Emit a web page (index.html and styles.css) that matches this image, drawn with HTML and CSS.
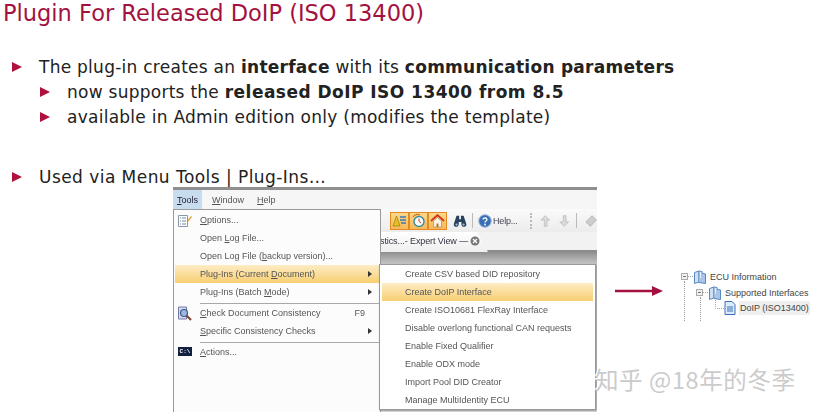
FILE: index.html
```html
<!DOCTYPE html>
<html lang="en">
<head>
<meta charset="utf-8">
<title>Plugin For Released DoIP</title>
<link rel="stylesheet" href="styles.css">
</head>
<body>
<main class="slide">
  <h1 class="title">Plugin For Released DoIP (ISO 13400)</h1>
  <ul class="bullets">
    <li class="lvl1">The plug-in creates an <b>interface</b> with its <b>communication parameters</b></li>
    <li class="lvl2">now supports the <b class="wide">released DoIP ISO 13400 from 8.5</b></li>
    <li class="lvl2">available in Admin edition only (modifies the template)</li>
    <li class="lvl1 gap">Used via Menu Tools | Plug-Ins…</li>
  </ul>
  <section class="figure">
    <div class="shot">
      <div class="menubar">
        <span class="mb-item active"><u>T</u>ools</span>
        <span class="mb-item"><u>W</u>indow</span>
        <span class="mb-item"><u>H</u>elp</span>
      </div>
      <div class="toolbar">
        <div class="toggles">
          <span class="toggle"><svg width="15" height="13" viewBox="0 0 15 13"><path d="M1 12 4.500 2 8 12z" fill="#e8c020" stroke="#8a7010" stroke-width=".6"/><path d="M8 3h6M8 6h6M9 9h5" stroke="#3b78b8" stroke-width="1.400"/></svg></span>
          <span class="toggle"><svg width="15" height="15" viewBox="0 0 15 15"><circle cx="8" cy="8.500" r="5" fill="#fff" stroke="#3a8a9a" stroke-width="1.400"/><path d="M8 5.500v3l2 1.500" stroke="#c04020" fill="none"/><path d="M2 4C4 1 7 1 9 2" stroke="#d07018" stroke-width="1.200" fill="none"/></svg></span>
          <span class="toggle"><svg width="15" height="14" viewBox="0 0 15 14"><path d="M1 7 7.500 1 14 7" fill="none" stroke="#d03818" stroke-width="1.800"/><path d="M3.500 7v6h8V7L7.500 3.500z" fill="#fbf6e8" stroke="#a88860" stroke-width=".7"/><path d="M6.500 9.500h2V13h-2z" fill="#c07028"/></svg></span>
        </div>
        <svg class="binoc" width="16" height="14" viewBox="0 0 16 14"><path d="M4 1h3v4h2V1h3l3 9a2.800 2.800 0 1 1-5.500 1V8h-3v3A2.800 2.800 0 1 1 1 10z" fill="#27415e"/><circle cx="4" cy="11" r="1.300" fill="#9fc0e0"/><circle cx="12" cy="11" r="1.300" fill="#9fc0e0"/></svg>
        <span class="tsep"></span>
        <span class="help"><svg width="14" height="14" viewBox="0 0 14 14"><circle cx="7" cy="7" r="6.200" fill="#3b6fb5" stroke="#8fb0d8"/><path d="M5 5.500C5 3.500 9 3.500 9 5.500 9 7 7 7 7 8.500" fill="none" stroke="#fff" stroke-width="1.300"/><circle cx="7" cy="10.500" r=".9" fill="#fff"/></svg>Help...</span>
        <span class="grip"></span>
        <svg class="ticon" width="14" height="14" viewBox="0 0 14 14"><path d="M7 1 12 6H9v7H6V6H2z" fill="#d8d8d8" stroke="#aaa" stroke-width=".8"/></svg>
        <svg class="ticon" width="14" height="14" viewBox="0 0 14 14"><path d="M7 13 12 8H9V1H6v7H2z" fill="#d8d8d8" stroke="#aaa" stroke-width=".8"/></svg>
        <span class="tsep"></span>
        <svg class="ticon tight" width="14" height="14" viewBox="0 0 14 14"><path d="M1 8 8 1l5 5-7 7z" fill="#c4c8c8" stroke="#999" stroke-width=".8"/></svg>
      </div>
      <div class="tabs"><span class="tab">stics...- Expert View — <svg width="10" height="10" viewBox="0 0 10 10"><circle cx="5" cy="5" r="4.500" fill="#777"/><path d="M3 3l4 4M7 3 3 7" stroke="#fff" stroke-width="1.300"/></svg></span></div>
      <div class="workspace"></div>

      <div class="menu">
        <div class="row"><svg class="mi" width="16" height="15" viewBox="0 0 16 15"><path d="M1.500 2.500h9v11h-9z" fill="#fff" stroke="#8a96a8"/><path d="M3 5h1M5 5h4M3 8h1M5 8h4M3 11h1M5 11h4" stroke="#7088a8"/><path d="M10 8l4-5 1 1-4 5z" fill="#e0a030"/></svg><span class="lbl"><u>O</u>ptions...</span></div>
        <div class="row"><span class="lbl">Open <u>L</u>og File...</span></div>
        <div class="row"><span class="lbl">Open Log File (<u>b</u>ackup version)...</span></div>
        <div class="row hi"><span class="lbl">Plug-Ins (Current <u>D</u>ocument)</span><i class="caret"></i></div>
        <div class="row"><span class="lbl">Plug-Ins (Batch <u>M</u>ode)</span><i class="caret"></i></div>
        <div class="msep"></div>
        <div class="row"><svg class="mi" width="16" height="15" viewBox="0 0 16 15"><path d="M1.500 1h8v12h-8z" fill="#d8dcf0" stroke="#7078a8"/><circle cx="7" cy="7" r="3.500" fill="#9ab8e0" stroke="#405888" stroke-width="1.200"/><path d="M9.500 9.500 14 14" stroke="#804030" stroke-width="2"/></svg><span class="lbl"><u>C</u>heck Document Consistency</span><span class="key">F9</span></div>
        <div class="row"><span class="lbl"><u>S</u>pecific Consistency Checks</span><i class="caret"></i></div>
        <div class="msep"></div>
        <div class="row"><span class="mi console">C:\</span><span class="lbl"><u>A</u>ctions...</span></div>
      </div>

      <div class="submenu">
        <div class="row">Create CSV based DID repository</div>
        <div class="row hi">Create DoIP Interface</div>
        <div class="row">Create ISO10681 FlexRay Interface</div>
        <div class="row">Disable overlong functional CAN requests</div>
        <div class="row">Enable Fixed Qualifier</div>
        <div class="row">Enable ODX mode</div>
        <div class="row">Import Pool DID Creator</div>
        <div class="row">Manage MultiIdentity ECU</div>
      </div>
    </div>

    <svg class="arrow" width="48" height="12" viewBox="0 0 48 12"><path d="M0 6h40" stroke="#a3123f" stroke-width="2.400"/><path d="M37 1 48 6 37 11z" fill="#a3123f"/></svg>

    <div class="tree">
      <div class="node">
        <svg class="lines" width="14" height="16" viewBox="0 0 14 16"><rect x="1.500" y="4.500" width="6" height="6" fill="#f0f0f0" stroke="#aaa"/><path d="M3 7.500h3" stroke="#777"/><path d="M8 7.500h6" stroke="#aaa" stroke-dasharray="1 1"/></svg>
        <svg class="book" width="14" height="14" viewBox="0 0 14 14"><path d="M1.500 2.500 6 1v11l-4.500 1.500z" fill="#cfe0f4" stroke="#5a88c0"/><path d="M6 1 9 1.500V12l-3 0z" fill="#e8f0fa" stroke="#5a88c0"/><path d="M9 3l3.500 1v9.500L6 12.500" fill="#a9c6ea" stroke="#5a88c0"/></svg>
        <span>ECU Information</span>
      </div>
      <div class="node indent1">
        <svg class="lines" width="14" height="16" viewBox="0 0 14 16"><rect x="1.500" y="4.500" width="6" height="6" fill="#f0f0f0" stroke="#aaa"/><path d="M3 7.500h3" stroke="#777"/><path d="M8 7.500h6" stroke="#aaa" stroke-dasharray="1 1"/></svg>
        <svg class="book" width="14" height="14" viewBox="0 0 14 14"><path d="M1.500 2.500 6 1v11l-4.500 1.500z" fill="#cfe0f4" stroke="#5a88c0"/><path d="M6 1 9 1.500V12l-3 0z" fill="#e8f0fa" stroke="#5a88c0"/><path d="M9 3l3.500 1v9.500L6 12.500" fill="#a9c6ea" stroke="#5a88c0"/></svg>
        <span>Supported Interfaces</span>
      </div>
      <div class="node indent2">
        <svg class="lines" width="14" height="16" viewBox="0 0 14 16"><path d="M4.500 0v8.500H14" fill="none" stroke="#aaa" stroke-dasharray="1 1"/></svg>
        <svg class="book" width="12" height="14" viewBox="0 0 12 14"><path d="M1 .5h7l3 3v10H1z" fill="#dcebfa" stroke="#3a70b8"/><path d="M3 6h6M3 8h6M3 10h6" stroke="#3a70b8"/></svg>
        <span class="sel">DoIP (ISO13400)</span>
      </div>
      <i class="vline v1"></i>
      <i class="vline v2"></i>
    </div>
  </section>
  <div class="watermark">知乎 @18年的冬季</div>
</main>
</body>
</html>
```

FILE: styles.css
```css
* { box-sizing: border-box; }
html, body { margin: 0; padding: 0; background: #fff; }
.slide { position: relative; width: 813px; height: 412px; overflow: hidden; font-family: "DejaVu Sans", Verdana, sans-serif; color: #222; }
.title { margin: 0; padding-left: 3px; font-size: 22.5px; line-height: 27px; font-weight: 400; color: #a3123f; }
.bullets { list-style: none; margin: 28px 0 0; padding: 0; font-size: 17px; letter-spacing: .26px; }
.bullets b { font-weight: 700; }
.bullets b.wide { letter-spacing: .47px; }
.bullets li { position: relative; height: 25px; line-height: 24px; white-space: nowrap; }
.bullets li::before { content: ""; position: absolute; top: 7px; border-left: 10px solid #b0103c; border-top: 5px solid transparent; border-bottom: 5px solid transparent; }
.lvl1 { padding-left: 39px; }
.lvl1::before { left: 12px; }
.lvl2 { padding-left: 67px; }
.lvl2::before { left: 40px; }
.bullets .gap { margin-top: 35px; letter-spacing: .45px; }

.figure { display: flex; align-items: flex-start; margin: -3px 0 0 173px; }
.shot { position: relative; flex: none; width: 424px; height: 225px; overflow: hidden; background: #f5f5f5; border-top: 3px solid #8f8f8f; font-family: "Liberation Sans", Arial, sans-serif; font-size: 9px; color: #555; filter: blur(.35px); }
.menubar { display: flex; align-items: center; height: 19px; background: #f6f6f6; }
.mb-item { padding: 0 4px; height: 19px; line-height: 20px; margin-right: 5px; }
.mb-item.active { background: #c8dcf0; color: #223; margin-right: 6px; }
.toolbar { display: flex; align-items: center; height: 23px; padding: 3px 0 3px 217px; background: linear-gradient(#fafafa, #ececec); }
.toggles { display: flex; }
.toggle { display: flex; align-items: center; justify-content: center; width: 19px; height: 18px; background: linear-gradient(#fbd98c, #f5b95a); border: 1px solid #e58a20; }
.binoc { margin-left: 6px; }
.tsep { width: 1px; height: 15px; margin: 0 5px; background: #bbb; }
.help { display: flex; align-items: center; gap: 1px; color: #445; width: 52px; letter-spacing: -.2px; }
.grip { width: 2px; height: 16px; margin-left: 6px; border-left: 2px dotted #bbb; }
.ticon { margin-left: 7px; opacity: .85; }
.ticon.tight { margin-left: 3px; }
.tabs { height: 20px; padding-left: 207px; background: #f2f2f2; border-bottom: 2px solid #8c8c8c; }
.tab { display: inline-block; height: 20px; width: 108px; line-height: 19px; letter-spacing: -.1px; background: linear-gradient(#fff, #eee); color: #334; clip-path: polygon(0 0, 90% 0, 100% 100%, 0 100%); }
.tab svg { vertical-align: -2px; }
.workspace { height: 140px; background: linear-gradient(#8e8e8e, #cfcfcf 14px, #e8e8e8 16px); }

.menu, .submenu { position: absolute; background: #fff; border: 1px solid #9a9a9a; }
.menu { left: 0; top: 19px; width: 208px; height: 210px; padding: 1px; background: #fcfcfc; }
.submenu { left: 206px; top: 74px; width: 217px; padding: 0 2px; box-shadow: 1px 1px 2px #888; }
.row { position: relative; display: flex; align-items: center; height: 18px; white-space: nowrap; }
.menu .row { padding-left: 25px; }
.submenu .row { padding-left: 23px; }
.hi { background: linear-gradient(#fdecc4, #f8cf72); }
.lbl { flex: 1; }
.mi { position: absolute; left: 2px; top: 2px; }
.console { width: 14px; height: 9px; top: 4px; left: 3px; background: #11203f; color: #fff; font: 700 6px/9px "Liberation Mono", monospace; text-align: center; }
.caret { border-left: 4px solid #333; border-top: 3px solid transparent; border-bottom: 3px solid transparent; margin-right: 7px; }
.key { margin-right: 14px; }
.msep { height: 3px; margin: 0 0 0 25px; border-bottom: 1px solid #a8a8a8; }

.arrow { flex: none; margin: 98px 0 0 18px; }
.tree { position: relative; flex: none; margin: 82px 0 0 10px; padding-left: 7px; font-family: "Liberation Sans", Arial, sans-serif; font-size: 9px; color: #444; width: 141px; }
.node { display: flex; align-items: center; height: 16px; white-space: nowrap; margin-bottom: -.5px; }
.indent1 { padding-left: 15px; }
.indent2 { padding-left: 31px; }
.lines { flex: none; }
.book { flex: none; margin: 0 3px 0 -1px; }
.sel { background: #efefef; padding: 2px 1px; }
.vline { position: absolute; width: 0; border-left: 1px dotted #999; }
.v1 { left: 11px; top: 12px; height: 40px; }
.v2 { left: 27px; top: 28px; height: 24px; }

.watermark { position: absolute; left: 595px; top: 365px; font-family: "Noto Sans CJK SC", sans-serif; font-size: 23.5px; line-height: 28px; letter-spacing: .6px; white-space: nowrap; color: #cbcbcb; text-shadow: 1px 1px 0 #fff, -1px -1px 0 #fff; }
```
